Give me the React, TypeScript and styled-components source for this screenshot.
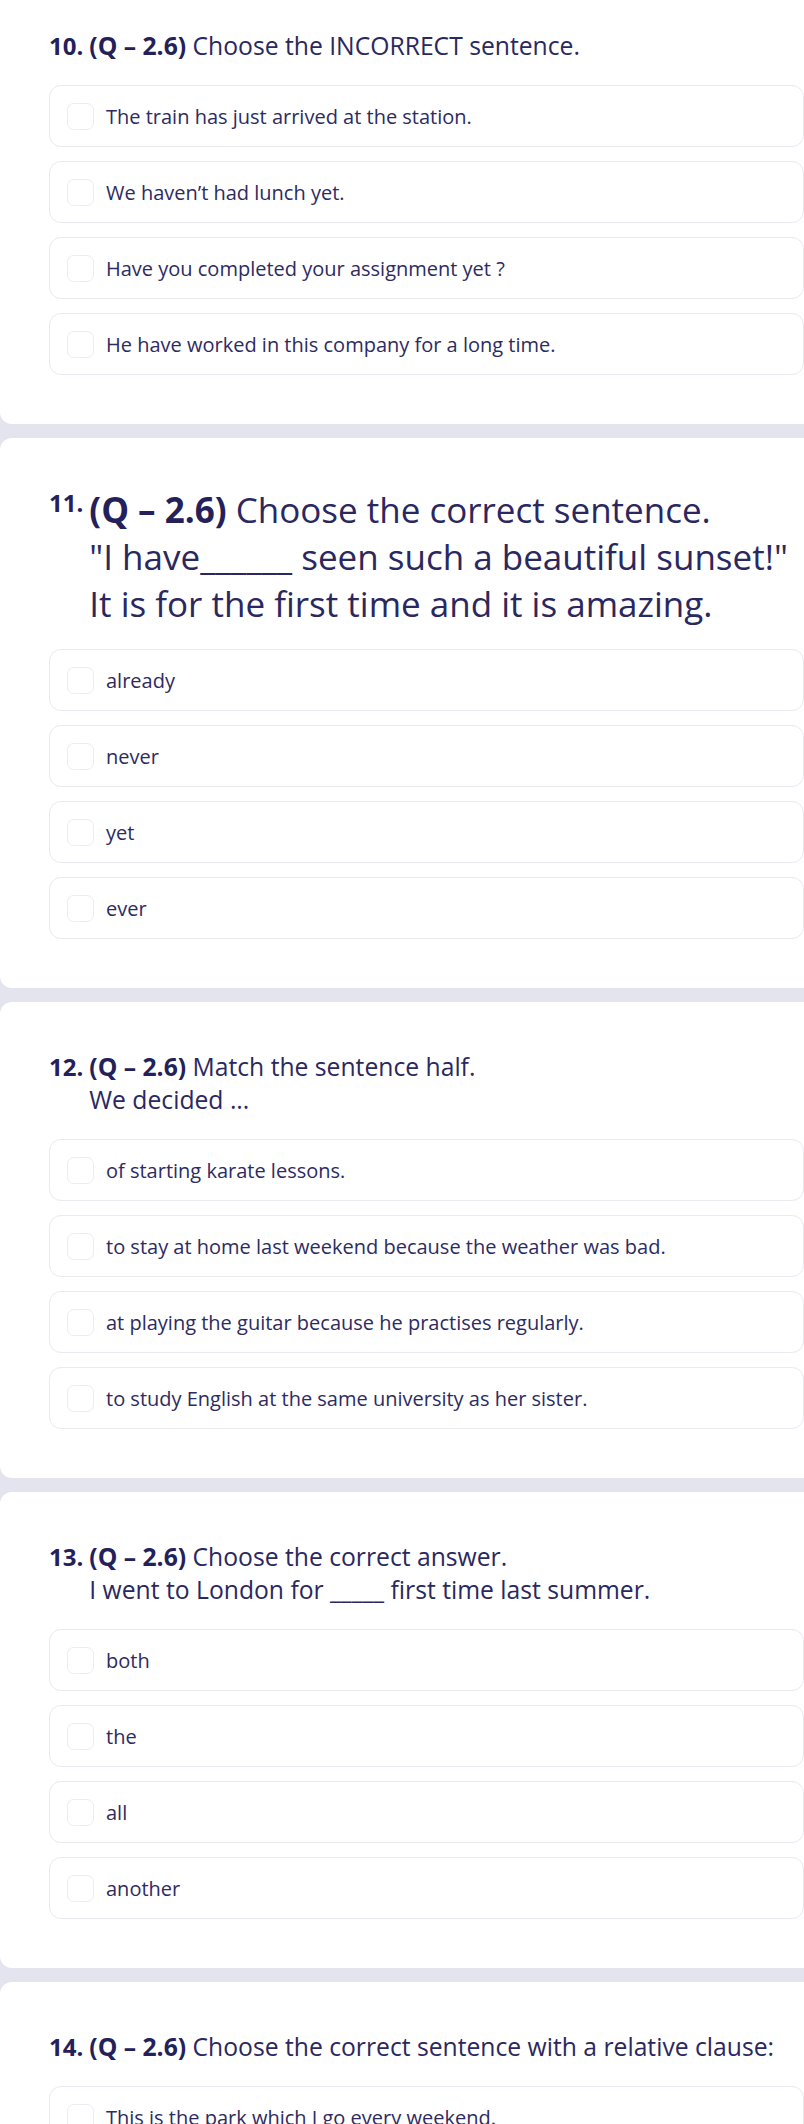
import React from "react";
import styled, { createGlobalStyle } from "styled-components";

const GlobalStyle = createGlobalStyle`
  html, body {
    margin: 0;
    padding: 0;
    background: #e4e4ef;
    overflow: hidden;
  }
  body {
    font-family: "Open Sans", "Noto Sans", sans-serif;
    color: #2a285e;
  }
`;

const Page = styled.div`
  width: 804px;
  height: 2124px;
  overflow: hidden;
`;

const List = styled.div`
  display: flex;
  flex-direction: column;
  gap: 14px;
  margin-top: -19px;
`;

const Card = styled.section`
  width: 840px;
  box-sizing: border-box;
  background: #ffffff;
  border-radius: 12px;
  padding: 48px 0 49px 49px;
`;

const TitleRow = styled.div<{ $gap?: number }>`
  display: flex;
  align-items: flex-start;
  margin-bottom: ${(p) => p.$gap ?? 23}px;
  line-height: normal;
`;

const Num = styled.span`
  flex: none;
  font-weight: 700;
  font-size: 24px;
  color: #24215a;
  margin-right: 6px;
`;

const Content = styled.div<{ $size?: number }>`
  font-size: ${(p) => p.$size ?? 24.7}px;
  color: #2a285e;
`;

const Bold = styled.strong`
  font-weight: 700;
  color: #24215a;
`;

const Options = styled.div`
  display: flex;
  flex-direction: column;
  gap: 14px;
  width: 755px;
`;

const Option = styled.label`
  display: flex;
  align-items: center;
  gap: 12px;
  height: 62px;
  box-sizing: border-box;
  padding: 0 17px;
  border: 1px solid #e9e9f0;
  border-radius: 12px;
  background: #ffffff;
  font-size: 20px;
  color: #2d2b62;
`;

const Box = styled.span`
  flex: none;
  width: 27px;
  height: 27px;
  box-sizing: border-box;
  border: 1.5px solid #ececf4;
  border-radius: 7px;
  background: #fff;
`;

type Q = {
  num: string;
  size?: number;
  gap?: number;
  lines: React.ReactNode[];
  options: string[];
};

const questions: Q[] = [
  {
    num: "10.",
    lines: [
      <>
        <Bold>(Q – 2.6)</Bold> Choose the INCORRECT sentence.
      </>,
    ],
    options: [
      "The train has just arrived at the station.",
      "We haven’t had lunch yet.",
      "Have you completed your assignment yet ?",
      "He have worked in this company for a long time.",
    ],
  },
  {
    num: "11.",
    size: 35,
    gap: 22,
    lines: [
      <>
        <Bold>(Q – 2.6)</Bold> Choose the correct sentence.
      </>,
      <>"I have______ seen such a beautiful sunset!"</>,
      <>It is for the first time and it is amazing.</>,
    ],
    options: ["already", "never", "yet", "ever"],
  },
  {
    num: "12.",
    lines: [
      <>
        <Bold>(Q – 2.6)</Bold> Match the sentence half.
      </>,
      <>We decided ...</>,
    ],
    options: [
      "of starting karate lessons.",
      "to stay at home last weekend because the weather was bad.",
      "at playing the guitar because he practises regularly.",
      "to study English at the same university as her sister.",
    ],
  },
  {
    num: "13.",
    lines: [
      <>
        <Bold>(Q – 2.6)</Bold> Choose the correct answer.
      </>,
      <>I went to London for _____ first time last summer.</>,
    ],
    options: ["both", "the", "all", "another"],
  },
  {
    num: "14.",
    lines: [
      <>
        <Bold>(Q – 2.6)</Bold> Choose the correct sentence with a relative
        clause:
      </>,
    ],
    options: ["This is the park which I go every weekend."],
  },
];

export default function App() {
  return (
    <Page>
      <GlobalStyle />
      <List>
        {questions.map((q) => (
          <Card key={q.num}>
            <TitleRow $gap={q.gap}>
              <Num>{q.num}</Num>
              <Content $size={q.size}>
                {q.lines.map((l, i) => (
                  <div key={i}>{l}</div>
                ))}
              </Content>
            </TitleRow>
            <Options>
              {q.options.map((o) => (
                <Option key={o}>
                  <Box />
                  <span>{o}</span>
                </Option>
              ))}
            </Options>
          </Card>
        ))}
      </List>
    </Page>
  );
}
